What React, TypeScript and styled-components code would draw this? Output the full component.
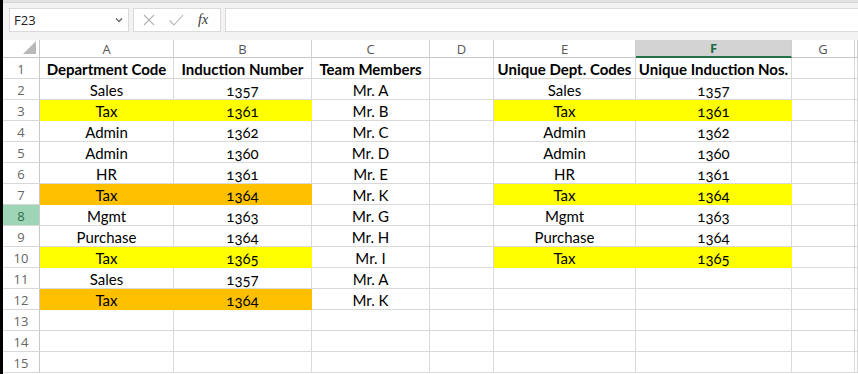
import React from "react";
import styled, { createGlobalStyle } from "styled-components";

const GlobalStyle = createGlobalStyle`
  html, body {
    margin: 0;
    padding: 0;
    background: #ffffff;
  }
`;

type Fill = "yellow" | "orange" | undefined;

const fills: Record<string, string> = {
  yellow: "#ffff00",
  orange: "#ffc000",
};

const Frame = styled.div`
  width: 858px;
  height: 374px;
  box-sizing: border-box;
  border-left: 3px solid #000;
  display: flex;
  flex-direction: column;
  overflow: hidden;
  font-family: "Segoe UI", "Open Sans", "Noto Sans", sans-serif;
`;

const TopStrip = styled.div`
  height: 3px;
  background: #e2e2e2;
  border-bottom: 1px solid #d6d6d6;
  box-sizing: border-box;
`;

const FormulaBar = styled.div`
  display: flex;
  gap: 4px;
  height: 37px;
  box-sizing: border-box;
  padding: 5px 0 8px 6px;
  background: #f3f3f3;
`;

const NameBox = styled.div`
  width: 120px;
  box-sizing: border-box;
  background: #fff;
  border: 1px solid #dadada;
  display: flex;
  align-items: center;
  justify-content: space-between;
  padding: 0 5px 0 4px;
  font-size: 13px;
  color: #222;
`;

const FxBox = styled.div`
  width: 88px;
  box-sizing: border-box;
  background: #fff;
  border: 1px solid #dadada;
  display: flex;
  align-items: center;
  gap: 12px;
  padding-left: 8px;
`;

const FxLabel = styled.span`
  font-family: "Liberation Serif", serif;
  font-style: italic;
  font-size: 14px;
  color: #333;
  margin-left: 2px;
`;

const FormulaInput = styled.div`
  flex: 1;
  background: #fff;
  border: 1px solid #dadada;
  border-right: none;
`;

const Sheet = styled.div`
  display: grid;
  grid-template-columns: 37px 134px 138px 118px 64px 142px 156px 63px 1fr;
  grid-template-rows: 18px repeat(15, 21px);
  font-family: "Lato", "Open Sans", sans-serif;
`;

const Corner = styled.div`
  position: relative;
  background: #fff;
  border-right: 1px solid #c8c8c8;
  border-bottom: 1px solid #c8c8c8;
  box-sizing: border-box;
`;

const CornerMark = styled.div`
  position: absolute;
  right: 3px;
  bottom: 3px;
  width: 0;
  height: 0;
  border-left: 13px solid transparent;
  border-bottom: 13px solid #b9b9b9;
`;

const ColHead = styled.div<{ $active?: boolean }>`
  box-sizing: border-box;
  display: flex;
  align-items: center;
  justify-content: center;
  font-family: "Segoe UI", "Open Sans", sans-serif;
  font-size: 13px;
  color: ${(p) => (p.$active ? "#1e6b41" : "#555")};
  font-weight: ${(p) => (p.$active ? 700 : 400)};
  background: ${(p) => (p.$active ? "#d3d3d3" : "#fff")};
  border-right: 1px solid #d0d0d0;
  border-bottom: ${(p) => (p.$active ? "2px solid #217346" : "1px solid #c8c8c8")};
`;

const RowHead = styled.div<{ $active?: boolean }>`
  box-sizing: border-box;
  display: flex;
  align-items: center;
  justify-content: center;
  padding-top: 1px;
  font-family: "Segoe UI", "Open Sans", sans-serif;
  font-size: 13px;
  color: ${(p) => (p.$active ? "#2b6e4a" : "#666")};
  background: ${(p) => (p.$active ? "#9fd5b7" : "#fff")};
  border-right: 1px solid #c8c8c8;
  border-bottom: 1px solid #d8d8d8;
`;

const Cell = styled.div<{ $fill?: Fill; $bold?: boolean }>`
  box-sizing: border-box;
  display: flex;
  align-items: flex-end;
  justify-content: center;
  line-height: 18px;
  white-space: nowrap;
  overflow: visible;
  font-size: 15px;
  color: #000;
  font-weight: ${(p) => (p.$bold ? 700 : 400)};
  font-variant-numeric: oldstyle-nums;
  background: ${(p) => (p.$fill ? fills[p.$fill] : "#fff")};
  border-right: 1px solid ${(p) => (p.$fill ? fills[p.$fill] : "#d9d9d9")};
  border-bottom: 1px solid ${(p) => (p.$fill ? fills[p.$fill] : "#d9d9d9")};
`;

const Chevron = () => (
  <svg width="8" height="6" viewBox="0 0 8 6">
    <path d="M1 1.5 L4 4.5 L7 1.5" fill="none" stroke="#555" strokeWidth="1.1" />
  </svg>
);

const CancelIcon = () => (
  <svg width="14" height="14" viewBox="0 0 14 14">
    <path d="M2 2 L12 12 M12 2 L2 12" stroke="#b3b3b3" strokeWidth="1.1" />
  </svg>
);

const EnterIcon = () => (
  <svg width="16" height="14" viewBox="0 0 16 14">
    <path d="M1.5 7.5 L6 12 L15 2" fill="none" stroke="#b3b3b3" strokeWidth="1.1" />
  </svg>
);

type Row = { cells: (string | null)[]; fill?: Fill; fillEF?: Fill };

const rows: Row[] = [
  { cells: ["Department Code", "Induction Number", "Team Members", null, "Unique Dept. Codes", "Unique Induction Nos."] },
  { cells: ["Sales", "1357", "Mr. A", null, "Sales", "1357"] },
  { cells: ["Tax", "1361", "Mr. B", null, "Tax", "1361"], fill: "yellow", fillEF: "yellow" },
  { cells: ["Admin", "1362", "Mr. C", null, "Admin", "1362"] },
  { cells: ["Admin", "1360", "Mr. D", null, "Admin", "1360"] },
  { cells: ["HR", "1361", "Mr. E", null, "HR", "1361"] },
  { cells: ["Tax", "1364", "Mr. K", null, "Tax", "1364"], fill: "orange", fillEF: "yellow" },
  { cells: ["Mgmt", "1363", "Mr. G", null, "Mgmt", "1363"] },
  { cells: ["Purchase", "1364", "Mr. H", null, "Purchase", "1364"] },
  { cells: ["Tax", "1365", "Mr. I", null, "Tax", "1365"], fill: "yellow", fillEF: "yellow" },
  { cells: ["Sales", "1357", "Mr. A", null, null, null] },
  { cells: ["Tax", "1364", "Mr. K", null, null, null], fill: "orange" },
  { cells: [] },
  { cells: [] },
  { cells: [] },
];

const columns = ["A", "B", "C", "D", "E", "F", "G", ""];

export default function App() {
  return (
    <>
      <GlobalStyle />
      <Frame>
        <TopStrip />
        <FormulaBar>
          <NameBox>
            <span>F23</span>
            <Chevron />
          </NameBox>
          <FxBox>
            <CancelIcon />
            <EnterIcon />
            <FxLabel>fx</FxLabel>
          </FxBox>
          <FormulaInput />
        </FormulaBar>
        <Sheet>
          <Corner>
            <CornerMark />
          </Corner>
          {columns.map((c, i) => (
            <ColHead key={i} $active={c === "F"}>
              {c}
            </ColHead>
          ))}
          {rows.map((row, r) => (
            <React.Fragment key={r}>
              <RowHead $active={r === 7}>{r + 1}</RowHead>
              {columns.map((_, ci) => {
                let fill: Fill;
                if (ci <= 1) fill = row.fill;
                if (ci === 4 || ci === 5) fill = row.fillEF;
                return (
                  <Cell key={ci} $fill={fill} $bold={r === 0}>
                    {row.cells[ci] ?? ""}
                  </Cell>
                );
              })}
            </React.Fragment>
          ))}
        </Sheet>
      </Frame>
    </>
  );
}
